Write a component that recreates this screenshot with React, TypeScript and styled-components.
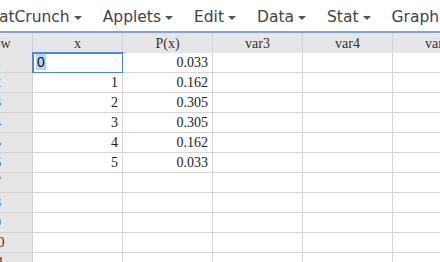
import React from 'react';
import styled, { createGlobalStyle } from 'styled-components';

const GlobalStyle = createGlobalStyle`
  html, body {
    margin: 0;
    padding: 0;
    background: #ffffff;
    overflow: hidden;
  }
`;

const Page = styled.div`
  width: 440px;
  height: 262px;
  overflow: hidden;
  background: #fff;
`;

const MenuBar = styled.nav`
  height: 33px;
  display: flex;
  align-items: center;
  gap: 21px;
  margin-left: -17px;
  padding-top: 3px;
  box-sizing: border-box;
  border-bottom: 2px solid #7aa5ea;
  font-family: 'DejaVu Sans', sans-serif;
  font-size: 15.5px;
  color: #444;
  white-space: nowrap;
`;

const MenuItem = styled.div`
  display: flex;
  align-items: center;
  gap: 4px;
  flex: none;
`;

const Caret = styled.span`
  display: inline-block;
  width: 0;
  height: 0;
  border-top: 4px solid #555;
  border-left: 4px solid transparent;
  border-right: 4px solid transparent;
  margin-top: 1px;
`;

const Sheet = styled.div`
  display: grid;
  grid-template-columns: 67px repeat(5, 90px);
  grid-auto-rows: 20px;
  margin-left: -34px;
  font-family: 'Liberation Serif', serif;
  font-size: 14px;
  color: #222;
`;

const HeadCell = styled.div<{ $label?: boolean }>`
  height: 22px;
  box-sizing: border-box;
  background: #e6e6e6;
  border-right: 1px solid #d2d2d2;
  border-bottom: 1px solid #d2d2d2;
  line-height: 21px;
  text-align: center;
  padding-right: ${(p) => (p.$label ? '3px' : '0')};
  color: #333;
`;

const RowHead = styled.div`
  box-sizing: border-box;
  background: #e6e6e6;
  border-right: 1px solid #d2d2d2;
  border-bottom: 1px solid #d2d2d2;
  line-height: 19px;
  text-align: center;
  padding-right: 3px;
  color: #333;
`;

const Cell = styled.div<{ $active?: boolean }>`
  box-sizing: border-box;
  background: #fff;
  border-right: 1px solid #d6d6d6;
  border-bottom: 1px solid #d6d6d6;
  line-height: 19px;
  text-align: right;
  padding-right: 4px;
  outline: ${(p) => (p.$active ? '2px solid #4a88e4' : 'none')};
  outline-offset: -1px;
`;

const EditCell = styled(Cell)`
  text-align: left;
  padding-left: 3px;
  font-family: 'Liberation Sans', sans-serif;
  font-size: 14px;
  color: #111;
`;

const Selected = styled.span`
  background: #b4d5fe;
  padding: 0 1px;
`;

const menus = ['StatCrunch', 'Applets', 'Edit', 'Data', 'Stat', 'Graph'];
const columns = ['x', 'P(x)', 'var3', 'var4', 'var5'];
const data: [string, string][] = [
  ['0', '0.033'],
  ['1', '0.162'],
  ['2', '0.305'],
  ['3', '0.305'],
  ['4', '0.162'],
  ['5', '0.033'],
];

function App() {
  const rows = Array.from({ length: 12 }, (_, i) => i);

  return (
    <Page>
      <GlobalStyle />
      <MenuBar>
        {menus.map((m) => (
          <MenuItem key={m}>
            {m}
            <Caret />
          </MenuItem>
        ))}
      </MenuBar>
      <Sheet>
        <HeadCell $label>Row</HeadCell>
        {columns.map((c) => (
          <HeadCell key={c}>{c}</HeadCell>
        ))}
        {rows.map((i) => {
          const row = data[i];
          return (
            <React.Fragment key={i}>
              <RowHead>{i + 1}</RowHead>
              {i === 0 ? (
                <EditCell $active>
                  <Selected>0</Selected>
                </EditCell>
              ) : (
                <Cell>{row ? row[0] : ''}</Cell>
              )}
              <Cell>{row ? row[1] : ''}</Cell>
              <Cell />
              <Cell />
              <Cell />
            </React.Fragment>
          );
        })}
      </Sheet>
    </Page>
  );
}

export default App;
